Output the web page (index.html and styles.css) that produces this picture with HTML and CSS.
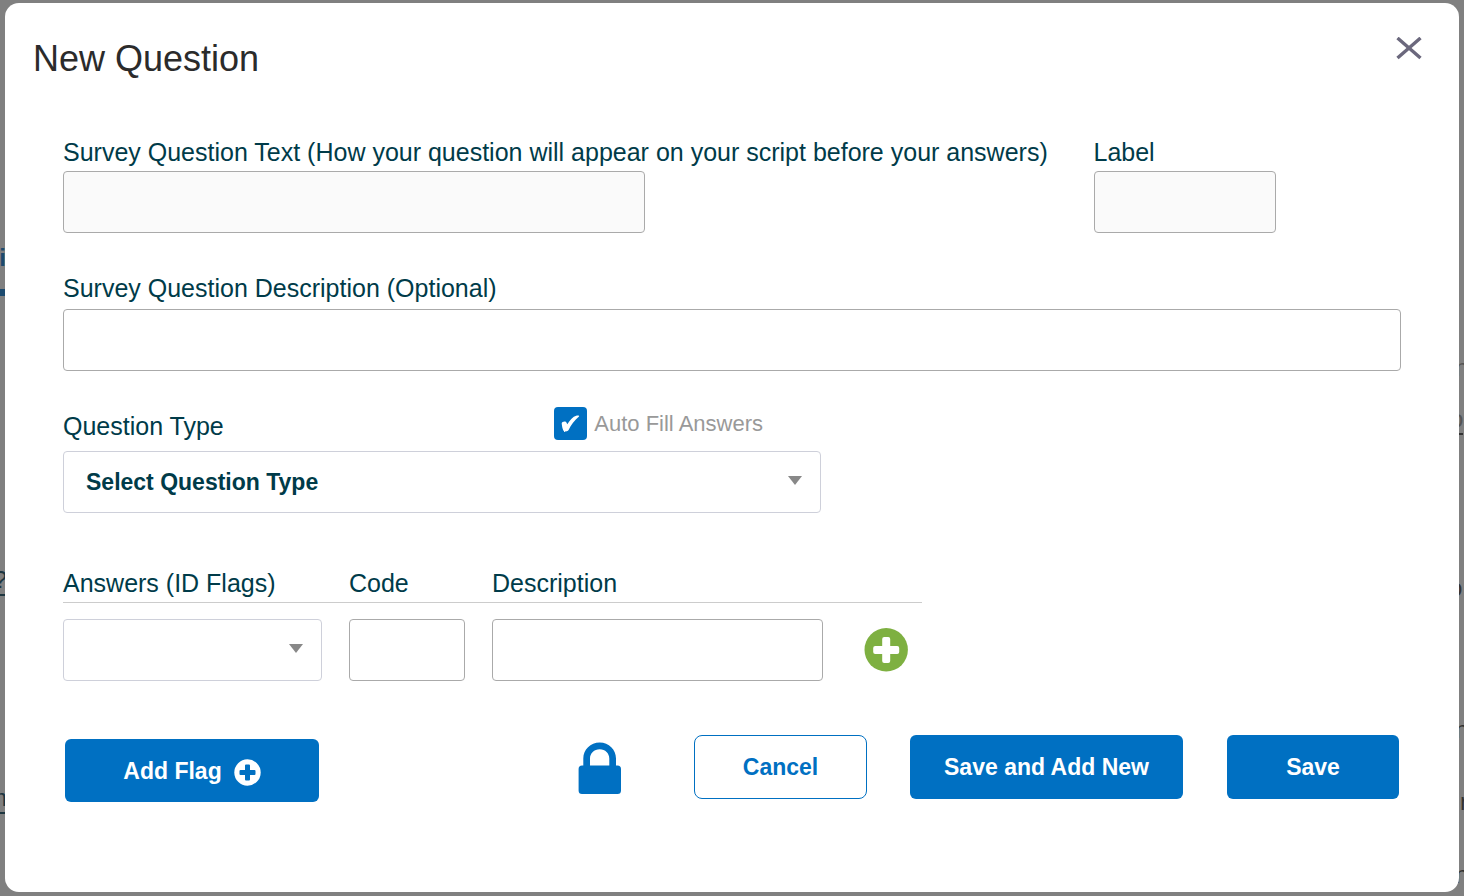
FILE: index.html
```html
<!DOCTYPE html>
<html lang="en">
<head>
<meta charset="utf-8">
<title>New Question</title>
<link rel="stylesheet" href="styles.css">
</head>
<body>
<div class="page-behind" aria-hidden="true">
  <span class="peek tab-text">ti</span>
  <span class="peek tab-bar"></span>
  <span class="peek link-a">?</span>
  <span class="peek link-b">m</span>
  <span class="peek edge-a">n</span>
  <span class="peek edge-b">o</span>
  <span class="peek edge-c">o</span>
  <span class="peek edge-d">n</span>
  <span class="peek edge-e">r</span>
  <span class="peek edge-f">n</span>
</div>
<main class="modal" role="dialog" aria-labelledby="title">
  <header class="modal-header">
    <h1 id="title" class="title">New Question</h1>
    <button class="close" type="button" aria-label="Close">
      <svg width="26" height="23" viewBox="0 0 26 23"><path d="M1.500 1 24.500 21M24.500 1 1.500 21" fill="none" stroke="#6b687d" stroke-width="3.400"/></svg>
    </button>
  </header>
  <form class="form">
    <div class="row row-text">
      <div class="field question-field">
        <label for="text">Survey Question Text (How your question will appear on your script before your answers)</label>
        <input class="box shaded text-box" id="text" type="text">
      </div>
      <div class="field">
        <label for="label">Label</label>
        <input class="box shaded label-box" id="label" type="text">
      </div>
    </div>
    <div class="field row-desc">
      <label for="desc">Survey Question Description (Optional)</label>
      <input class="box" id="desc" type="text">
    </div>
    <div class="row-type">
      <div class="type-head">
        <label for="type">Question Type</label>
        <span class="autofill">
          <span class="check">
            <input id="auto" type="checkbox" checked>
            <svg width="19" height="17" viewBox="0 0 19 17"><path d="M.7 8.500C.5 6.500 4.700 5.500 5.400 7.400L6.300 9.200C9 4.800 12 1.500 15.200.700 17 .300 18.800.600 18 1.500 13.500 5 10 10 7.600 15 6.800 16.800 3 16.800 2.200 15.200 1.500 13.500.900 11 .700 8.500Z" fill="#fff"/></svg>
          </span>
          <label class="auto-label" for="auto">Auto Fill Answers</label>
        </span>
      </div>
      <div class="select">
        <select class="box" id="type"><option>Select Question Type</option></select>
        <svg class="arrow" width="14" height="9" viewBox="0 0 14 9"><path d="M0 0H14L7 9Z" fill="#888"/></svg>
      </div>
    </div>
    <table class="answers">
      <colgroup><col class="col-flag"><col class="col-code"><col class="col-desc"><col class="col-add"></colgroup>
      <thead>
        <tr><th scope="col">Answers (ID Flags)</th><th scope="col">Code</th><th scope="col">Description</th><th></th></tr>
      </thead>
      <tbody>
        <tr>
          <td><div class="select flag-select">
            <select class="box" aria-label="Answer"><option></option></select>
            <svg class="arrow" width="14" height="9" viewBox="0 0 14 9"><path d="M0 0H14L7 9Z" fill="#888"/></svg>
          </div></td>
          <td><input class="box code-box" type="text" aria-label="Code"></td>
          <td><input class="box answer-box" type="text" aria-label="Description"></td>
          <td><button class="add" type="button" aria-label="Add answer">
            <svg width="44" height="44" viewBox="0 0 44 44"><circle cx="22.200" cy="21.800" r="21.700" fill="#7eb041"/><path d="M20.200 9h4q2 0 2 2v7h7q2 0 2 2v4q0 2-2 2h-7v7q0 2-2 2h-4q-2 0-2-2v-7h-7q-2 0-2-2v-4q0-2 2-2h7v-7q0-2 2-2Z" fill="#fff"/></svg>
          </button></td>
        </tr>
      </tbody>
    </table>
    <footer class="actions">
      <button class="btn add-flag" type="button">Add Flag
        <svg width="27" height="27" viewBox="0 0 27 27"><circle cx="13.500" cy="13.500" r="13.200" fill="#fff"/><path d="M12 5.500h3q1 0 1 1V11h4.500q1 0 1 1v3q0 1-1 1H16v4.500q0 1-1 1h-3q-1 0-1-1V16H6.500q-1 0-1-1v-3q0-1 1-1H11V6.500q0-1 1-1Z" fill="#0070c2"/></svg>
      </button>
      <svg class="lock" width="44" height="52" viewBox="0 0 44 52" role="img" aria-label="Locked"><path d="M5.300 23.500V16.500C5.300 7.500 12.500.500 21.700.500S38 7.500 38 16.500V23.500H39.500Q43 23.500 43 27V48.500Q43 52 39.500 52H4Q.600 52 .600 48.500V27Q.600 23.500 4 23.500ZM12 23.500H31.300V16.500C31.300 11.500 27.300 7.300 21.700 7.300S12 11.500 12 16.500Z" fill="#0070c2"/></svg>
      <button class="btn cancel" type="button">Cancel</button>
      <button class="btn save-new" type="button">Save and Add New</button>
      <button class="btn save" type="submit">Save</button>
    </footer>
  </form>
</main>
</body>
</html>
```
FILE: styles.css
```css
* { box-sizing: border-box; }
body {
  margin: 0;
  min-height: 100vh;
  padding: 3px 5px 4px;
  display: flex;
  background: #808080;
  color: #003b49;
  font: 25px/32px "Liberation Sans", Arial, sans-serif;
}
button, input, select { font: inherit; color: inherit; margin: 0; }
button { border: 0; background: none; padding: 0; cursor: pointer; }
svg { display: block; }

.page-behind { position: absolute; inset: 0; overflow: hidden; }
.peek { position: absolute; font-size: 24px; line-height: 28px; color: #333; }
.tab-text { right: calc(100% - 6px); top: 244px; color: #1c4a6e; font-weight: 700; }
.tab-bar { left: 0; top: 289px; width: 5px; height: 7px; background: #1c4a6e; }
.link-a, .link-b { right: calc(100% - 7px); color: #1d3640; border-bottom: 2px solid; }
.link-a { top: 566px; }
.link-b { top: 784px; }
.edge-a, .edge-b, .edge-c, .edge-d, .edge-e, .edge-f { left: calc(100% - 9px); }
.edge-a { top: 354px; color: #555; }
.edge-b { left: calc(100% - 14px); top: 405px; color: #555; border-bottom: 2px solid #333; }
.edge-c { left: calc(100% - 15px); top: 574px; }
.edge-d { top: 716px; }
.edge-e { left: calc(100% - 4px); top: 788px; }
.edge-f { top: 861px; }

.modal {
  position: relative;
  flex: 1;
  min-width: 0;
  padding: 34px 28px;
  background: #fff;
  border-radius: 14px;
}
.modal-header { display: flex; justify-content: space-between; align-items: flex-start; }
.title { margin: 0; font-size: 36px; line-height: 44px; font-weight: 400; color: #2b2b2b; }
.close { margin-right: 9px; }
.form { padding: 55px 30px 0; }

.field { display: flex; flex-direction: column; gap: 3px; }
.box {
  display: block;
  width: 100%;
  height: 62px;
  padding: 0 22px;
  border: 1px solid #aaa;
  border-radius: 4px;
  background: #fff;
}
.shaded { background: #fafafa; }
.row-text { display: flex; gap: 27px; }
.question-field { width: 75%; }
.text-box { width: 582px; max-width: 100%; }
.label-box { width: 182px; }
.row-desc { margin-top: 39px; gap: 5px; }

.row-type { width: 758px; max-width: 100%; margin-top: 36px; }
.type-head { display: flex; justify-content: space-between; align-items: flex-end; margin-bottom: 9px; }
.autofill { display: flex; align-items: center; gap: 7px; height: 35px; padding-right: 58px; padding-bottom: 2px; }
.check { display: grid; place-items: center; }
.check > * { grid-area: 1 / 1; }
.check input { appearance: none; width: 33px; height: 33px; border-radius: 4px; background: #0070c2; }
.check svg { position: relative; pointer-events: none; }
.auto-label { font-size: 22px; color: #999; }
.select { display: grid; align-items: center; }
.select > * { grid-area: 1 / 1; }
.select select { appearance: none; border-color: #ced0da; font-size: 23px; font-weight: 700; }
.arrow { justify-self: end; margin: 0 19px 3px 0; pointer-events: none; }

.answers { width: 859px; max-width: 100%; margin-top: 54px; border-collapse: separate; border-spacing: 0; table-layout: fixed; }
.answers th { padding: 0 0 3px; border-bottom: 1px solid #ccc; text-align: left; font-weight: 400; }
.answers td { padding: 16px 0 0; }
.col-flag { width: 286px; }
.col-code { width: 143px; }
.col-desc { width: 372px; }
.flag-select { width: 259px; }
.code-box { width: 116px; }
.answer-box { width: 331px; }
.add { display: block; }

.actions { display: flex; align-items: flex-start; margin-top: 54px; padding: 0 2px; }
.btn { height: 64px; border-radius: 6px; background: #0070c2; color: #fff; font-size: 23px; font-weight: 700; }
.add-flag { display: flex; align-items: center; justify-content: center; gap: 12px; width: 254px; height: 63px; margin-top: 4px; }
.add-flag svg { margin-top: 4px; }
.lock { margin: 7px 72px 0 auto; }
.cancel { width: 173px; border: 1px solid #0070c2; border-radius: 8px; background: #fff; color: #0070c2; }
.save-new { width: 273px; margin: 0 44px 0 43px; }
.save { width: 172px; }
```
